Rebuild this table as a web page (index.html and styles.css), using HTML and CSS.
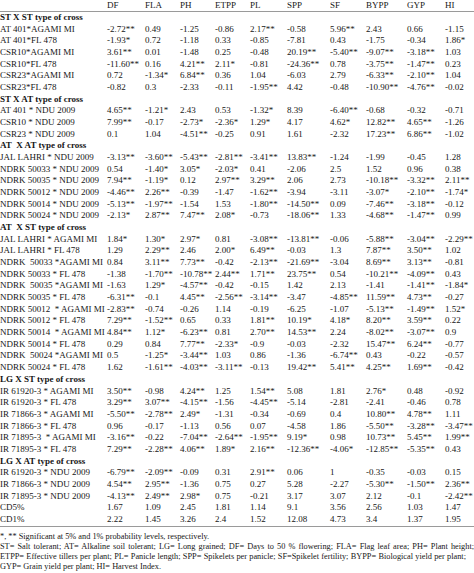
FILE: index.html
```html
<!DOCTYPE html>
<html>
<head>
<meta charset="utf-8">
<link rel="stylesheet" href="styles.css">
</head>
<body>
<div class="page">
<table class="tbl">
<colgroup>
<col class="c-lab"><col class="c-df"><col class="c-fla"><col class="c-ph"><col class="c-etpp"><col class="c-pl"><col class="c-spp"><col class="c-sf"><col class="c-bypp"><col class="c-gyp"><col class="c-hi">
</colgroup>
<thead>
<tr class="head"><th></th><th>DF</th><th>FLA</th><th>PH</th><th>ETPP</th><th>PL</th><th>SPP</th><th>SF</th><th>BYPP</th><th>GYP</th><th>HI</th></tr>
</thead>
<tbody>
<tr class="sec"><td colspan="11">ST X ST type of cross</td></tr>
<tr><td>AT 401*AGAMI MI</td><td>-2.72**</td><td>0.49</td><td>-1.25</td><td>-0.86</td><td>2.17**</td><td>-0.58</td><td>5.96**</td><td>2.43</td><td>0.66</td><td>-1.15</td></tr>
<tr><td>AT 401*FL 478</td><td>-1.93*</td><td>0.72</td><td>-1.18</td><td>0.33</td><td>-0.85</td><td>-7.81</td><td>0.43</td><td>-1.75</td><td>-0.34</td><td>1.86*</td></tr>
<tr><td>CSR10*AGAMI MI</td><td>3.61**</td><td>0.01</td><td>-1.48</td><td>0.25</td><td>-0.48</td><td>20.19**</td><td>-5.40**</td><td>-9.07**</td><td>-3.18**</td><td>1.03</td></tr>
<tr><td>CSR10*FL 478</td><td>-11.60**</td><td>0.16</td><td>4.21**</td><td>2.11*</td><td>-0.81</td><td>-24.36**</td><td>0.78</td><td>-3.75**</td><td>-1.47**</td><td>0.23</td></tr>
<tr><td>CSR23*AGAMI MI</td><td>0.72</td><td>-1.34*</td><td>6.84**</td><td>0.36</td><td>1.04</td><td>-6.03</td><td>2.79</td><td>-6.33**</td><td>-2.10**</td><td>1.04</td></tr>
<tr><td>CSR23*FL 478</td><td>-0.82</td><td>0.3</td><td>-2.33</td><td>-0.11</td><td>-1.95**</td><td>4.42</td><td>-0.48</td><td>-10.90**</td><td>-4.76**</td><td>-0.02</td></tr>
<tr class="sec"><td colspan="11">ST X AT type of cross</td></tr>
<tr><td>AT 401 * NDU 2009</td><td>4.65**</td><td>-1.21*</td><td>2.43</td><td>0.53</td><td>-1.32*</td><td>8.39</td><td>-6.40**</td><td>-0.68</td><td>-0.32</td><td>-0.71</td></tr>
<tr><td>CSR10 * NDU 2009</td><td>7.99**</td><td>-0.17</td><td>-2.73*</td><td>-2.36*</td><td>1.29*</td><td>4.17</td><td>4.62*</td><td>12.82**</td><td>4.65**</td><td>-1.26</td></tr>
<tr><td>CSR23 * NDU 2009</td><td>0.1</td><td>1.04</td><td>-4.51**</td><td>-0.25</td><td>0.91</td><td>1.61</td><td>-2.32</td><td>17.23**</td><td>6.86**</td><td>-1.02</td></tr>
<tr class="sec"><td colspan="11">AT&nbsp; X AT type of cross</td></tr>
<tr><td>JAL LAHRI * NDU 2009</td><td>-3.13**</td><td>-3.60**</td><td>-5.43**</td><td>-2.81**</td><td>-3.41**</td><td>13.83**</td><td>-1.24</td><td>-1.99</td><td>-0.45</td><td>1.28</td></tr>
<tr><td>NDRK 50033 * NDU 2009</td><td>0.54</td><td>-1.40*</td><td>3.05*</td><td>-2.03*</td><td>0.41</td><td>-2.06</td><td>2.5</td><td>1.52</td><td>0.96</td><td>0.38</td></tr>
<tr><td>NDRK 50035 * NDU 2009</td><td>7.94**</td><td>-1.19*</td><td>0.12</td><td>2.97**</td><td>3.29**</td><td>2.06</td><td>2.73</td><td>-10.18**</td><td>-3.32**</td><td>2.11**</td></tr>
<tr><td>NDRK 50012 * NDU 2009</td><td>-4.46**</td><td>2.26**</td><td>-0.39</td><td>-1.47</td><td>-1.62**</td><td>-3.94</td><td>-3.11</td><td>-3.07*</td><td>-2.10**</td><td>-1.74*</td></tr>
<tr><td>NDRK 50014 * NDU 2009</td><td>-5.13**</td><td>-1.97**</td><td>-1.54</td><td>1.53</td><td>-1.80**</td><td>-14.50**</td><td>0.09</td><td>-7.46**</td><td>-3.18**</td><td>-0.12</td></tr>
<tr><td>NDRK 50024 * NDU 2009</td><td>-2.13*</td><td>2.87**</td><td>7.47**</td><td>2.08*</td><td>-0.73</td><td>-18.06**</td><td>1.33</td><td>-4.68**</td><td>-1.47**</td><td>0.99</td></tr>
<tr class="sec"><td colspan="11">AT&nbsp; X ST type of cross</td></tr>
<tr><td>JAL LAHRI * AGAMI MI</td><td>1.84*</td><td>1.30*</td><td>2.97*</td><td>0.81</td><td>-3.08**</td><td>-13.81**</td><td>-0.06</td><td>-5.88**</td><td>-3.04**</td><td>-2.29**</td></tr>
<tr><td>JAL LAHRI * FL 478</td><td>1.29</td><td>2.29**</td><td>2.46</td><td>2.00*</td><td>6.49**</td><td>-0.03</td><td>1.3</td><td>7.87**</td><td>3.50**</td><td>1.02</td></tr>
<tr><td>NDRK&nbsp; 50033 *AGAMI MI</td><td>0.84</td><td>3.11**</td><td>7.73**</td><td>-0.42</td><td>-2.13**</td><td>-21.69**</td><td>-3.04</td><td>8.69**</td><td>3.13**</td><td>-0.81</td></tr>
<tr><td>NDRK 50033 * FL 478</td><td>-1.38</td><td>-1.70**</td><td>-10.78**</td><td>2.44**</td><td>1.71**</td><td>23.75**</td><td>0.54</td><td>-10.21**</td><td>-4.09**</td><td>0.43</td></tr>
<tr><td>NDRK&nbsp; 50035 *AGAMI MI</td><td>-1.63</td><td>1.29*</td><td>-4.57**</td><td>-0.42</td><td>-0.15</td><td>1.42</td><td>2.13</td><td>-1.41</td><td>-1.41**</td><td>-1.84*</td></tr>
<tr><td>NDRK 50035 * FL 478</td><td>-6.31**</td><td>-0.1</td><td>4.45**</td><td>-2.56**</td><td>-3.14**</td><td>-3.47</td><td>-4.85**</td><td>11.59**</td><td>4.73**</td><td>-0.27</td></tr>
<tr><td>NDRK 50012&nbsp; * AGAMI MI</td><td>-2.83**</td><td>-0.74</td><td>-0.26</td><td>1.14</td><td>-0.19</td><td>-6.25</td><td>-1.07</td><td>-5.13**</td><td>-1.49**</td><td>1.52*</td></tr>
<tr><td>NDRK 50012 * FL 478</td><td>7.29**</td><td>-1.52**</td><td>0.65</td><td>0.33</td><td>1.81**</td><td>10.19*</td><td>4.18*</td><td>8.20**</td><td>3.59**</td><td>0.22</td></tr>
<tr><td>NDRK 50014&nbsp; * AGAMI MI</td><td>4.84**</td><td>1.12*</td><td>-6.23**</td><td>0.81</td><td>2.70**</td><td>14.53**</td><td>2.24</td><td>-8.02**</td><td>-3.07**</td><td>0.9</td></tr>
<tr><td>NDRK 50014 * FL 478</td><td>0.29</td><td>0.84</td><td>7.77**</td><td>-2.33*</td><td>-0.9</td><td>-0.03</td><td>-2.32</td><td>15.47**</td><td>6.24**</td><td>-0.77</td></tr>
<tr><td>NDRK&nbsp; 50024 *AGAMI MI</td><td>0.5</td><td>-1.25*</td><td>-3.44**</td><td>1.03</td><td>0.86</td><td>-1.36</td><td>-6.74**</td><td>0.43</td><td>-0.22</td><td>-0.57</td></tr>
<tr><td>NDRK 50024 * FL 478</td><td>1.62</td><td>-1.61**</td><td>-4.03**</td><td>-3.11**</td><td>-0.13</td><td>19.42**</td><td>5.41**</td><td>4.25**</td><td>1.69**</td><td>-0.42</td></tr>
<tr class="sec"><td colspan="11">LG X ST type of cross</td></tr>
<tr><td>IR 61920-3 * AGAMI MI</td><td>3.50**</td><td>-0.98</td><td>4.24**</td><td>1.25</td><td>1.54**</td><td>5.08</td><td>1.81</td><td>2.76*</td><td>0.48</td><td>-0.92</td></tr>
<tr><td>IR 61920-3 * FL 478</td><td>3.29**</td><td>3.07**</td><td>-4.15**</td><td>-1.56</td><td>-4.45**</td><td>-5.14</td><td>-2.81</td><td>-2.41</td><td>-0.46</td><td>0.78</td></tr>
<tr><td>IR 71866-3 * AGAMI MI</td><td>-5.50**</td><td>-2.78**</td><td>2.49*</td><td>-1.31</td><td>-0.34</td><td>-0.69</td><td>0.4</td><td>10.80**</td><td>4.78**</td><td>1.11</td></tr>
<tr><td>IR 71866-3 * FL 478</td><td>0.96</td><td>-0.17</td><td>-1.13</td><td>0.56</td><td>0.07</td><td>-4.58</td><td>1.86</td><td>-5.50**</td><td>-3.28**</td><td>-3.47**</td></tr>
<tr><td>IR 71895-3&nbsp; * AGAMI MI</td><td>-3.16**</td><td>-0.22</td><td>-7.04**</td><td>-2.64**</td><td>-1.95**</td><td>9.19*</td><td>0.98</td><td>10.73**</td><td>5.45**</td><td>1.99**</td></tr>
<tr><td>IR 71895-3 * FL 478</td><td>7.29**</td><td>-2.28**</td><td>4.06**</td><td>1.89*</td><td>2.16**</td><td>-12.36**</td><td>-4.06*</td><td>-12.85**</td><td>-5.35**</td><td>0.43</td></tr>
<tr class="sec"><td colspan="11">LG X AT type of cross</td></tr>
<tr><td>IR 61920-3 * NDU 2009</td><td>-6.79**</td><td>-2.09**</td><td>-0.09</td><td>0.31</td><td>2.91**</td><td>0.06</td><td>1</td><td>-0.35</td><td>-0.03</td><td>0.15</td></tr>
<tr><td>IR 71866-3 * NDU 2009</td><td>4.54**</td><td>2.95**</td><td>-1.36</td><td>0.75</td><td>0.27</td><td>5.28</td><td>-2.27</td><td>-5.30**</td><td>-1.50**</td><td>2.36**</td></tr>
<tr><td>IR 71895-3 * NDU 2009</td><td>-4.13**</td><td>2.49**</td><td>2.98*</td><td>0.75</td><td>-0.21</td><td>3.17</td><td>3.07</td><td>2.12</td><td>-0.1</td><td>-2.42**</td></tr>
<tr><td>CD5%</td><td>1.67</td><td>1.09</td><td>2.45</td><td>1.81</td><td>1.14</td><td>9.1</td><td>3.56</td><td>2.56</td><td>1.03</td><td>1.47</td></tr>
<tr class="last"><td>CD1%</td><td>2.22</td><td>1.45</td><td>3.26</td><td>2.4</td><td>1.52</td><td>12.08</td><td>4.73</td><td>3.4</td><td>1.37</td><td>1.95</td></tr>
</tbody>
</table>
<div class="notes">
<div class="note">*, ** Significant at 5% and 1% probability levels, respectively.</div>
<div class="note just">ST= Salt tolerant; AT= Alkaline soil tolerant; LG= Long grained; DF= Days to 50 % flowering; FLA= Flag leaf area; PH= Plant height;</div>
<div class="note just short">ETPP= Effective tillers per plant; PL= Panicle length; SPP= Spikelets per panicle; SF=Spikelet fertility; BYPP= Biological yield per plant;</div>
<div class="note">GYP= Grain yield per plant; HI= Harvest Index.</div>
</div>
</div>
</body>
</html>
```

FILE: styles.css
```css
html, body {
  margin: 0;
  padding: 0;
  background: #ffffff;
}
body {
  width: 474px;
  height: 573px;
  overflow: hidden;
  font-family: "Liberation Serif", "Times New Roman", serif;
  color: #161616;
}
.page {
  margin-top: -1px;
  width: 474px;
}
.tbl {
  border-collapse: collapse;
  table-layout: fixed;
  width: 474px;
  font-size: 9px;
}
.c-lab { width: 107px; }
.c-df { width: 38px; }
.c-fla { width: 35px; }
.c-ph { width: 35px; }
.c-etpp { width: 35px; }
.c-pl { width: 37px; }
.c-spp { width: 43px; }
.c-sf { width: 36px; }
.c-bypp { width: 41px; }
.c-gyp { width: 38px; }
.c-hi { width: 29px; }
.tbl th, .tbl td {
  padding: 0;
  text-align: left;
  white-space: nowrap;
  font-weight: normal;
  height: 11.67px;
  line-height: 11.67px;
  overflow: visible;
}
.head th {
  height: 12px;
  line-height: 12px;
  border-bottom: 1px solid #9a9a9a;
}
.sec td {
  font-weight: bold;
}
.last td {
  border-bottom: 1px solid #9a9a9a;
}
.notes {
  padding-top: 5px;
  font-size: 8.3px;
  width: 474px;
}
.note {
  line-height: 10px;
  height: 10px;
  white-space: nowrap;
}
.just {
  white-space: normal;
  text-align: justify;
  text-align-last: justify;
}
.short {
  padding-right: 8px;
}
```
